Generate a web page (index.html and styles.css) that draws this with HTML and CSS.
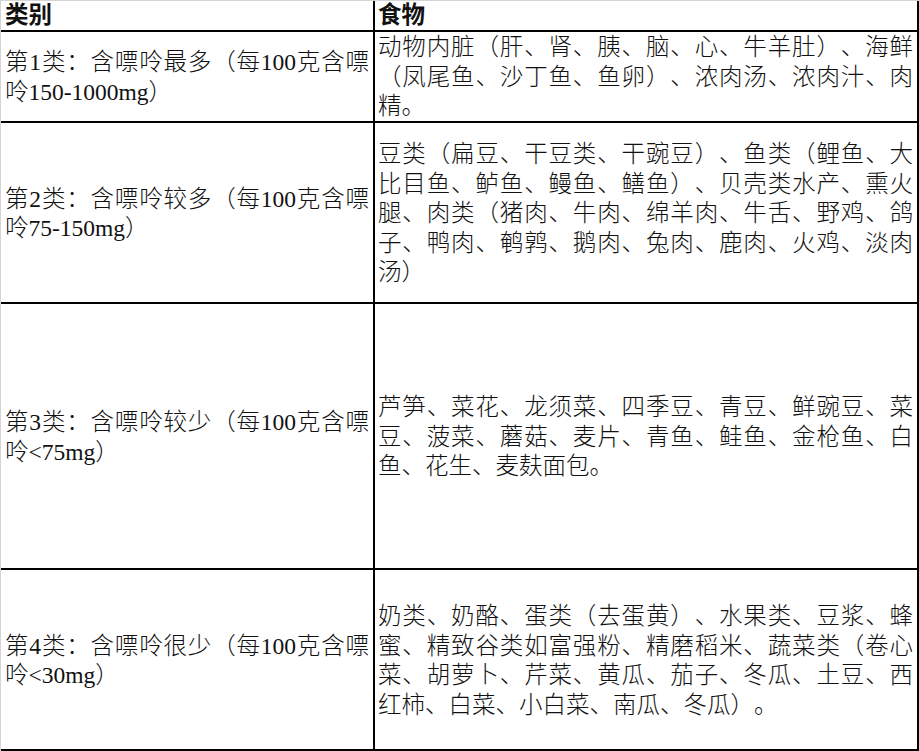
FILE: index.html
```html
<!DOCTYPE html>
<html lang="zh-CN">
<head>
<meta charset="utf-8">
<title>嘌呤含量分类表</title>
<link rel="stylesheet" href="styles.css">
</head>
<body>
<div class="frame">
  <div class="table">
    <div class="cell head">类别</div>
    <div class="cell head">食物</div>

    <div class="cell row1"><p>第1类：含嘌呤最多（每100克含嘌呤150-1000mg）</p></div>
    <div class="cell row1"><p>动物内脏（肝、肾、胰、脑、心、牛羊肚）、海鲜（凤尾鱼、沙丁鱼、鱼卵）、浓肉汤、浓肉汁、肉精。</p></div>

    <div class="cell"><p>第2类：含嘌呤较多（每100克含嘌呤75-150mg）</p></div>
    <div class="cell"><p>豆类（扁豆、干豆类、干豌豆）、鱼类（鲤鱼、大比目鱼、鲈鱼、鳗鱼、鳝鱼）、贝壳类水产、熏火腿、肉类（猪肉、牛肉、绵羊肉、牛舌、野鸡、鸽子、鸭肉、鹌鹑、鹅肉、兔肉、鹿肉、火鸡、淡肉汤）</p></div>

    <div class="cell"><p>第3类：含嘌呤较少（每100克含嘌呤&lt;75mg）</p></div>
    <div class="cell"><p>芦笋、菜花、龙须菜、四季豆、青豆、鲜豌豆、菜豆、菠菜、蘑菇、麦片、青鱼、鲑鱼、金枪鱼、白鱼、花生、麦麸面包。</p></div>

    <div class="cell"><p>第4类：含嘌呤很少（每100克含嘌呤&lt;30mg）</p></div>
    <div class="cell"><p>奶类、奶酪、蛋类（去蛋黄）、水果类、豆浆、蜂蜜、精致谷类如富强粉、精磨稻米、蔬菜类（卷心菜、胡萝卜、芹菜、黄瓜、茄子、冬瓜、土豆、西红柿、白菜、小白菜、南瓜、冬瓜）。</p></div>
  </div>
</div>
</body>
</html>
```

FILE: styles.css
```css
html, body {
  margin: 0;
  padding: 0;
  background: #ffffff;
}

body {
  font-family: "Liberation Serif", "Noto Sans CJK SC", serif;
  font-size: 23.5px;
  font-weight: 300;
  color: #111111;
  text-spacing-trim: space-all;
}

.frame {
  width: 918px;
  height: 750px;
  border-top: 1px solid #d4d4d4;
  border-left: 1px solid #d4d4d4;
}

.table {
  display: grid;
  grid-template-columns: 372px 542px;
  grid-template-rows: 29px 89px 179px 264px 179px;
  gap: 2px;
  background: #000000;
  padding: 0 2px 2px 0;
  width: max-content;
}

.cell {
  background: #ffffff;
  display: flex;
  align-items: center;
  padding: 3px 4px 0 4px;
  line-height: 29.5px;
}

.cell:nth-child(even) {
  padding: 3px 4px 0 3px;
}

.cell.row1 {
  padding-top: 2px;
}

.cell p {
  margin: 0;
  width: 100%;
  text-align: justify;
  line-break: strict;
}

.head {
  font-weight: 700;
  line-height: 29px;
  align-items: flex-start;
  padding-top: 0;
}

.cell.head:nth-child(even) {
  padding-top: 0;
}
```
